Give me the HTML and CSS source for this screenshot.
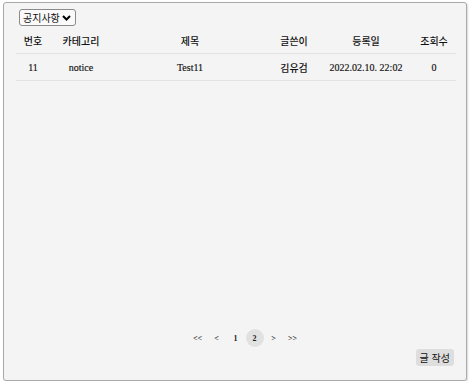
FILE: index.html
```html
<!DOCTYPE html>
<html lang="ko">
<head>
<meta charset="utf-8">
<link rel="stylesheet" href="styles.css">
</head>
<body>
<div class="board">
  <div class="top">
    <div class="select"><span>공지사항</span>
      <svg class="chev" width="9" height="6" viewBox="0 0 9 6"><path d="M1 1 L4.5 4.5 L8 1" fill="none" stroke="#000" stroke-width="2"/></svg>
    </div>
  </div>
  <table class="list">
    <colgroup>
      <col style="width:34px"><col style="width:62px"><col style="width:156px"><col style="width:52px"><col style="width:92px"><col style="width:44px">
    </colgroup>
    <thead>
      <tr><th>번호</th><th>카테고리</th><th>제목</th><th>글쓴이</th><th>등록일</th><th>조회수</th></tr>
    </thead>
    <tbody>
      <tr><td>11</td><td>notice</td><td>Test11</td><td>김유검</td><td>2022.02.10. 22:02</td><td>0</td></tr>
    </tbody>
  </table>
  <div class="spacer"></div>
  <div class="pager">
    <span class="pg">&lt;&lt;</span>
    <span class="pg">&lt;</span>
    <span class="pg">1</span>
    <span class="pg cur">2</span>
    <span class="pg">&gt;</span>
    <span class="pg">&gt;&gt;</span>
  </div>
  <div class="actions"><button class="write">글 작성</button></div>
</div>
</body>
</html>
```
FILE: styles.css
```css
html, body { margin: 0; padding: 0; background: #fff; }
body {
  font-family: "Liberation Serif", "Noto Sans CJK KR", serif;
  color: #111;
  padding: 2px 0 0 3px;
}
.board {
  box-sizing: border-box;
  width: 464px;
  height: 379px;
  border: 1px solid #a9a9a9;
  border-radius: 3px;
  background: #f4f4f4;
  box-shadow: 1px 1px 2px rgba(0,0,0,0.15);
  padding: 6px 10px 14px 12px;
  display: flex;
  flex-direction: column;
}
.top { display: flex; padding-left: 3px; }
.select {
  box-sizing: border-box;
  height: 17px;
  width: 57px;
  border: 1px solid #8a8a8a;
  border-radius: 3px;
  background: #fafafa;
  display: flex;
  align-items: center;
  justify-content: space-between;
  padding: 0 4px 0 3px;
  font-family: "Noto Sans CJK KR", sans-serif;
  font-size: 10px;
  line-height: 1;
}
.chev { display: block; }
.list {
  width: 440px;
  border-collapse: collapse;
  table-layout: fixed;
  margin-top: 0;
  font-size: 10px;
}
.list th {
  font-family: "Noto Sans CJK KR", sans-serif;
  font-weight: 500;
  height: 26px;
  padding: 1px 0 0;
  text-align: center;
  border-bottom: 1px solid #e2e2e2;
}
.list td {
  height: 26px;
  padding: 0;
  text-align: center;
  border-bottom: 1px solid #e2e2e2;
  font-weight: 400;
  -webkit-text-stroke: 0.15px #111;
}
.list td:nth-child(4) { font-family: "Noto Sans CJK KR", sans-serif; font-weight: 500; -webkit-text-stroke: 0; }
.spacer { flex: 1; }
.pager {
  display: flex;
  justify-content: center;
  align-items: center;
  gap: 1px;
  margin-left: 18px;
}
.pg {
  width: 18px;
  height: 18px;
  border-radius: 50%;
  display: flex;
  align-items: center;
  justify-content: center;
  font-size: 8px;
  font-weight: 700;
  color: #222;
}
.pg.cur { background: #e1e1e1; }
.actions { display: flex; justify-content: flex-end; margin-top: 2px; padding-right: 2px; }
.write {
  font-family: "Noto Sans CJK KR", sans-serif;
  font-size: 10px;
  border: none;
  border-radius: 3px;
  background: #dedede;
  color: #111;
  padding: 0 4px;
  height: 17px;
  white-space: nowrap;
}
```
